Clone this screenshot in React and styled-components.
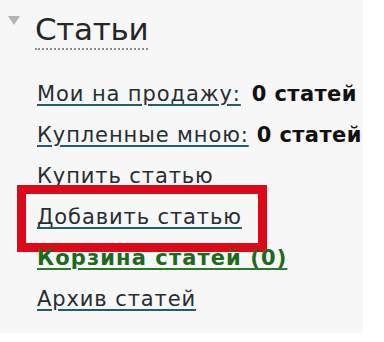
import React from "react";
import styled, { createGlobalStyle } from "styled-components";

const Global = createGlobalStyle`
  html, body { margin: 0; padding: 0; background: #ffffff; }
  body { font-family: "DejaVu Sans", Verdana, sans-serif; }
`;

const Panel = styled.div`
  width: 363px;
  height: 333px;
  box-sizing: border-box;
  background: #f7f7f7;
  padding: 10px 0 0 8px;
`;

const Header = styled.div`
  display: flex;
  align-items: flex-start;
  gap: 15px;
`;

const Arrow = styled.span`
  width: 0;
  height: 0;
  margin-top: 6px;
  border-left: 6px solid transparent;
  border-right: 6px solid transparent;
  border-top: 9px solid #b4b4b4;
`;

const Title = styled.h2`
  margin: 0;
  font-weight: normal;
  font-size: 31px;
  line-height: 38px;
  color: #262626;
  border-bottom: 2px dotted #8a8a8a;
  letter-spacing: -0.3px;
`;

const List = styled.ul`
  list-style: none;
  margin: 24px 0 0 29px;
  padding: 0;
  display: flex;
  flex-direction: column;
`;

const Row = styled.li`
  position: relative;
  font-size: 21px;
  line-height: 41px;
  height: 41px;
  white-space: nowrap;
  color: #1a1a1a;
`;

const Link = styled.a`
  color: ${(p) => (p.$green ? "#1d6a1d" : "#262e32")};
  font-weight: ${(p) => (p.$green ? "bold" : "normal")};
  letter-spacing: ${(p) => (p.$green ? "1.1px" : "0.9px")};
  text-decoration: underline;
  text-decoration-color: ${(p) => (p.$green ? "#2a7a2a" : "#1f5f6a")};
  text-underline-offset: 3px;
  text-decoration-thickness: 1.5px;
`;

const Count = styled.b`
  font-weight: bold;
  color: #111;
  margin-left: ${(p) => p.$gap || 7}px;
  letter-spacing: 0.4px;
`;

const Highlight = styled.span`
  position: absolute;
  left: -20px;
  top: -12px;
  width: 250px;
  height: 67px;
  box-sizing: border-box;
  border: 9px solid #dc0a18;
  pointer-events: none;
`;

export default function App() {
  return (
    <>
      <Global />
      <Panel>
        <Header>
          <Arrow />
          <Title>Статьи</Title>
        </Header>
        <List>
          <Row>
            <Link href="#">Мои на продажу:</Link>
            <Count $gap={11}>0 статей</Count>
          </Row>
          <Row>
            <Link href="#">Купленные мною:</Link>
            <Count $gap={8}>0 статей</Count>
          </Row>
          <Row>
            <Link href="#">Купить статью</Link>
          </Row>
          <Row>
            <Highlight />
            <Link href="#">Добавить статью</Link>
          </Row>
          <Row>
            <Link href="#" $green>
              Корзина статей (0)
            </Link>
          </Row>
          <Row>
            <Link href="#">Архив статей</Link>
          </Row>
        </List>
      </Panel>
    </>
  );
}
